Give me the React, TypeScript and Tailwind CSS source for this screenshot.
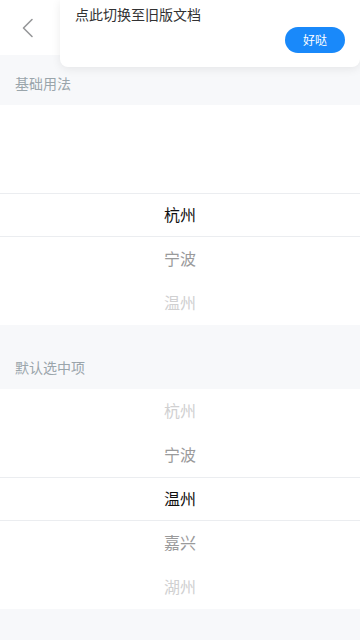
import React from "react";

const font = { fontFamily: '"Noto Sans CJK SC", "Noto Sans", sans-serif' };

type Item = { text: string; tone: "sel" | "near" | "far" | "empty" };

function Picker({ items, selIndex }: { items: Item[]; selIndex: number }) {
  return (
    <div className="bg-white flex flex-col">
      {items.map((it, i) => (
        <div
          key={i}
          className={
            "h-[44px] flex items-center justify-center text-[16px] pb-[2px] " +
            (i === selIndex ? "border-y border-[#ebedf0] " : "") +
            (it.tone === "sel"
              ? "text-[#111]"
              : it.tone === "near"
              ? "text-[#9a9a9b]"
              : "text-[#d0d0d1]")
          }
        >
          {it.text}
        </div>
      ))}
    </div>
  );
}

export default function App() {
  return (
    <div className="relative min-h-[640px] bg-[#f7f8fa]" style={font}>
      <div className="h-[55px] bg-white flex items-center pl-[21px]">
        <svg width="14" height="20" viewBox="0 0 14 20" fill="none">
          <path d="M11 1.5 L2.5 10 L11 18.5" stroke="#969799" strokeWidth="1.6" strokeLinecap="round" strokeLinejoin="round" />
        </svg>
      </div>

      <div className="absolute top-0 right-0 w-[300px] h-[67px] bg-white rounded-b-[8px] shadow-[0_2px_10px_rgba(0,0,0,0.08)] flex flex-col pl-[15px] pr-[15px]">
        <div className="text-[14px] leading-[20px] text-[#323233] pt-[4px]">点此切换至旧版文档</div>
        <div className="flex justify-end mt-[3px]">
          <div className="w-[60px] h-[26px] rounded-full bg-[#1989fa] text-white text-[12px] flex items-center justify-center">好哒</div>
        </div>
      </div>

      <div className="px-[15px] pt-[20px] pb-[14px] text-[14px] leading-[16px] text-[#9aa5ab]">基础用法</div>
      <Picker
        selIndex={2}
        items={[
          { text: "", tone: "empty" },
          { text: "", tone: "empty" },
          { text: "杭州", tone: "sel" },
          { text: "宁波", tone: "near" },
          { text: "温州", tone: "far" },
        ]}
      />

      <div className="px-[15px] pt-[34px] pb-[14px] text-[14px] leading-[16px] text-[#9aa5ab]">默认选中项</div>
      <Picker
        selIndex={2}
        items={[
          { text: "杭州", tone: "far" },
          { text: "宁波", tone: "near" },
          { text: "温州", tone: "sel" },
          { text: "嘉兴", tone: "near" },
          { text: "湖州", tone: "far" },
        ]}
      />
    </div>
  );
}
